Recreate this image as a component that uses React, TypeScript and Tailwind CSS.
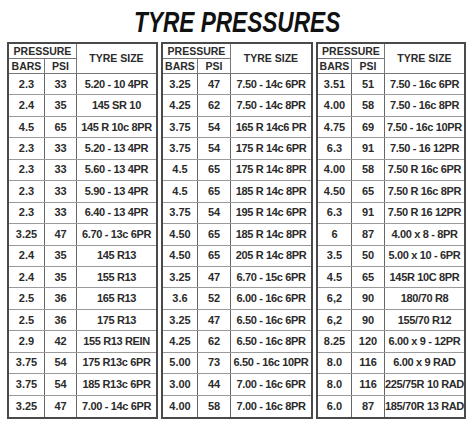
import React from "react";

type Row = [string, string, string];

const t1: Row[] = [
  ["2.3", "33", "5.20 - 10 4PR"],
  ["2.4", "35", "145 SR 10"],
  ["4.5", "65", "145 R 10c 8PR"],
  ["2.3", "33", "5.20 - 13 4PR"],
  ["2.3", "33", "5.60 - 13 4PR"],
  ["2.3", "33", "5.90 - 13 4PR"],
  ["2.3", "33", "6.40 - 13 4PR"],
  ["3.25", "47", "6.70 - 13c 6PR"],
  ["2.4", "35", "145 R13"],
  ["2.4", "35", "155 R13"],
  ["2.5", "36", "165 R13"],
  ["2.5", "36", "175 R13"],
  ["2.9", "42", "155 R13 REIN"],
  ["3.75", "54", "175 R13c 6PR"],
  ["3.75", "54", "185 R13c 6PR"],
  ["3.25", "47", "7.00 - 14c 6PR"],
];

const t2: Row[] = [
  ["3.25", "47", "7.50 - 14c 6PR"],
  ["4.25", "62", "7.50 - 14c 8PR"],
  ["3.75", "54", "165 R 14c6 PR"],
  ["3.75", "54", "175 R 14c 6PR"],
  ["4.5", "65", "175 R 14c 8PR"],
  ["4.5", "65", "185 R 14c 8PR"],
  ["3.75", "54", "195 R 14c 6PR"],
  ["4.50", "65", "185 R 14c 8PR"],
  ["4.50", "65", "205 R 14c 8PR"],
  ["3.25", "47", "6.70 - 15c 6PR"],
  ["3.6", "52", "6.00 - 16c 6PR"],
  ["3.25", "47", "6.50 - 16c 6PR"],
  ["4.25", "62", "6.50 - 16c 8PR"],
  ["5.00", "73", "6.50 - 16c 10PR"],
  ["3.00", "44", "7.00 - 16c 6PR"],
  ["4.00", "58", "7.00 - 16c 8PR"],
];

const t3: Row[] = [
  ["3.51", "51", "7.50 - 16c 6PR"],
  ["4.00", "58", "7.50 - 16c 8PR"],
  ["4.75", "69", "7.50 - 16c 10PR"],
  ["6.3", "91", "7.50 - 16 12PR"],
  ["4.00", "58", "7.50 R 16c 6PR"],
  ["4.50", "65", "7.50 R 16c 8PR"],
  ["6.3", "91", "7.50 R 16 12PR"],
  ["6", "87", "4.00 x 8 - 8PR"],
  ["3.5", "50", "5.00 x 10 - 6PR"],
  ["4.5", "65", "145R 10C 8PR"],
  ["6,2", "90", "180/70 R8"],
  ["6,2", "90", "155/70 R12"],
  ["8.25", "120", "6.00 x 9 - 12PR"],
  ["8.0", "116", "6.00 x 9 RAD"],
  ["8.0", "116", "225/75R 10 RAD"],
  ["6.0", "87", "185/70R 13 RAD"],
];

function Table({ rows, width, cols }: { rows: Row[]; width: string; cols: string }) {
  return (
    <div className={`${width} border-2 border-[#4a4a4a] bg-white`}>
      <div className={`grid ${cols} grid-rows-[15px_14px] border-b border-[#777]`}>
        <div className="col-span-2 border-b border-r border-[#777] flex items-center justify-center text-[10.5px] leading-none">
          PRESSURE
        </div>
        <div className="row-span-2 flex items-center justify-center text-[10.5px] leading-none">
          TYRE SIZE
        </div>
        <div className="border-r border-[#777] flex items-center justify-center text-[10.5px] leading-none">
          BARS
        </div>
        <div className="border-r border-[#777] flex items-center justify-center text-[10.5px] leading-none">
          PSI
        </div>
      </div>
      {rows.map((r, i) => (
        <div
          key={i}
          className={`grid ${cols} h-[21.45px] ${i < rows.length - 1 ? "border-b border-[#9a9a9a]" : ""}`}
        >
          <div className="border-r border-[#666] flex items-center justify-center">{r[0]}</div>
          <div className="border-r border-[#666] flex items-center justify-center">{r[1]}</div>
          <div className="flex items-center justify-center whitespace-nowrap tracking-[-0.35px]">{r[2]}</div>
        </div>
      ))}
    </div>
  );
}

export default function App() {
  return (
    <div
      className="w-[474px] h-[424px] bg-white text-[#2b2b2b] font-bold text-[11px] leading-none overflow-hidden"
      style={{ fontFamily: '"Liberation Sans", Arial, sans-serif' }}
    >
      <div className="h-[42px] pt-[8px] flex justify-center">
        <div className="inline-block scale-x-[0.78] text-[29px] leading-[29px] italic font-bold text-[#111] whitespace-nowrap">
          TYRE PRESSURES
        </div>
      </div>
      <div className="flex pl-[7px] gap-[3px]">
        <Table rows={t1} width="w-[151px]" cols="grid-cols-[36px_32px_1fr]" />
        <Table rows={t2} width="w-[152px]" cols="grid-cols-[35px_33px_1fr]" />
        <Table rows={t3} width="w-[150px]" cols="grid-cols-[34px_33px_1fr]" />
      </div>
    </div>
  );
}
